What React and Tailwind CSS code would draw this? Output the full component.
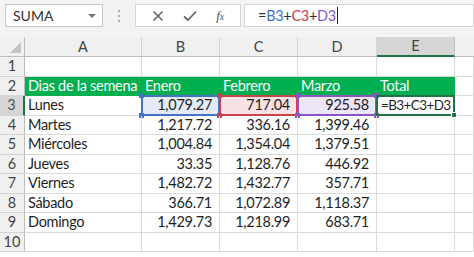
const font = { fontFamily: 'Lato, "Open Sans", sans-serif' };

const COLS = ['A', 'B', 'C', 'D', 'E'];
const DATA = [
  ['Lunes', '1,079.27', '717.04', '925.58'],
  ['Martes', '1,217.72', '336.16', '1,399.46'],
  ['Miércoles', '1,004.84', '1,354.04', '1,379.51'],
  ['Jueves', '33.35', '1,128.76', '446.92'],
  ['Viernes', '1,482.72', '1,432.77', '357.71'],
  ['Sábado', '366.71', '1,072.89', '1,118.37'],
  ['Domingo', '1,429.73', '1,218.99', '683.71'],
];

const RANGE = {
  blue: { border: 'border-[#4472c4]', fill: 'bg-[#e4eaf6]', dot: 'bg-[#4472c4]' },
  red: { border: 'border-[#c8434a]', fill: 'bg-[#f8e2e3]', dot: 'bg-[#c8434a]' },
  purple: { border: 'border-[#8a55c5]', fill: 'bg-[#eee6f7]', dot: 'bg-[#8a55c5]' },
};

function Range({ tone }) {
  const t = RANGE[tone];
  return (
    <div className={`absolute -left-px -top-px -right-px -bottom-px border-2 ${t.border} pointer-events-none`}>
      <span className={`absolute -left-[4px] -top-[4px] w-[5px] h-[5px] ${t.dot}`} />
      <span className={`absolute -right-[4px] -top-[4px] w-[5px] h-[5px] ${t.dot}`} />
      <span className={`absolute -left-[4px] -bottom-[4px] w-[5px] h-[5px] ${t.dot}`} />
      <span className={`absolute -right-[4px] -bottom-[4px] w-[5px] h-[5px] ${t.dot}`} />
    </div>
  );
}

function RowHead({ n, active }) {
  return (
    <div className={`flex items-center justify-center text-[14.5px] border-b border-[#d4d4d4] ${
      active ? 'bg-[#d6d6d6] text-[#555] border-r-2 border-r-[#217346]' : 'bg-[#f0f0f0] text-[#444] border-r border-r-[#bdbdbd]'
    }`}>
      {n}
    </div>
  );
}

function Cell({ children, right, className = '' }) {
  return (
    <div className={`relative flex items-center border-r border-b border-[#dadada] text-[14.5px] tracking-[-0.3px] text-[#1f1f1f] whitespace-nowrap ${
      right ? 'justify-end pr-[7px]' : 'pl-[3px]'
    } ${className}`}>
      {children}
    </div>
  );
}

export default function App() {
  return (
    <div className="w-[474px] h-[257px] overflow-hidden bg-white" style={font}>
      {/* formula bar */}
      <div className="h-[37px] bg-[#f3f3f3] flex items-start pt-[4px]">
        <div className="ml-[5px] w-[98px] h-[23px] bg-white border border-[#c9c9c9] flex items-center justify-between pl-[7px] pr-[6px]">
          <span className="text-[14px] text-[#333]">SUMA</span>
          <span className="w-0 h-0 border-l-[4px] border-r-[4px] border-t-[4px] border-l-transparent border-r-transparent border-t-[#777]" />
        </div>
        <div className="w-[32px] h-[23px] flex flex-col items-center justify-center gap-[3px]">
          <span className="w-[2px] h-[2px] bg-[#aaa]" />
          <span className="w-[2px] h-[2px] bg-[#aaa]" />
          <span className="w-[2px] h-[2px] bg-[#aaa]" />
        </div>
        <div className="w-[106px] h-[23px] bg-white border border-[#d6d6d6] flex items-center justify-around px-[6px]">
          <svg width="12" height="12" viewBox="0 0 12 12"><path d="M1.5 1.5 L10.5 10.5 M10.5 1.5 L1.5 10.5" stroke="#666" strokeWidth="1.6" /></svg>
          <svg width="14" height="12" viewBox="0 0 14 12"><path d="M1 6.5 L5 10 L13 1.5" stroke="#666" strokeWidth="1.8" fill="none" /></svg>
          <span className="text-[13px] italic text-[#555]" style={{ fontFamily: '"Liberation Serif", serif' }}>f<span className="text-[10px]">x</span></span>
        </div>
        <div className="ml-[3px] flex-1 h-[23px] bg-white border border-[#d6d6d6] flex items-center pl-[13px] text-[14.5px] tracking-[-0.3px]">
          <span className="text-[#333]">=</span>
          <span className="text-[#4472c4]">B3</span>
          <span className="text-[#333]">+</span>
          <span className="text-[#c8434a]">C3</span>
          <span className="text-[#333]">+</span>
          <span className="text-[#8a55c5]">D3</span>
          <span className="w-px h-[17px] bg-[#222] ml-px" />
        </div>
      </div>

      {/* sheet */}
      <div className="grid grid-cols-[25px_117px_78px_78px_79px_78px_1fr] grid-rows-[20px_repeat(10,19.5px)]">
        <div className="relative bg-[#f0f0f0] border-r border-b border-[#bdbdbd]">
          <span className="absolute right-[3px] bottom-[3px] w-0 h-0" style={{ borderBottom: '11px solid #c4c4c4', borderLeft: '11px solid transparent' }} />
        </div>
        {COLS.map((c) => (
          <div
            key={c}
            className={`flex items-center justify-center text-[14.5px] border-r ${
              c === 'E'
                ? 'bg-[#d6d6d6] text-[#444] border-b-2 border-b-[#217346] border-r-[#c4c4c4]'
                : 'bg-[#f0f0f0] text-[#444] border-b border-[#bdbdbd] border-r-[#d4d4d4]'
            }`}
          >
            {c}
          </div>
        ))}
        <div className="bg-[#f0f0f0] border-b border-[#bdbdbd]" />

        {/* row 1 */}
        <RowHead n={1} />
        {COLS.map((c) => <Cell key={c} />)}
        <Cell />

        {/* row 2 */}
        <RowHead n={2} />
        {['Dias de la semena', 'Enero', 'Febrero', 'Marzo', 'Total'].map((t) => (
          <div key={t} className="flex items-center pl-[3px] bg-[#00b050] text-white text-[14.5px] tracking-[-0.3px] whitespace-nowrap border-b border-[#00b050]">
            {t}
          </div>
        ))}
        <Cell />

        {/* row 3 */}
        <RowHead n={3} active />
        <Cell>Lunes</Cell>
        <Cell right className={RANGE.blue.fill}>
          1,079.27
          <Range tone="blue" />
        </Cell>
        <Cell right className={RANGE.red.fill}>
          717.04
          <Range tone="red" />
        </Cell>
        <Cell right className={RANGE.purple.fill}>
          925.58
          <Range tone="purple" />
        </Cell>
        <Cell className="z-10">
          <span className="pl-[1px] text-[13.5px] tracking-[-0.6px]">=B3+C3+D3</span>
          <div className="absolute -left-px -top-px -right-px -bottom-px border-2 border-[#217346]">
            <span className="absolute -right-[4px] -bottom-[4px] w-[6px] h-[6px] bg-[#217346] border border-white" />
          </div>
        </Cell>
        <Cell />

        {DATA.slice(1).map((r, i) => (
          <div key={r[0]} className="contents">
            <RowHead n={i + 4} />
            <Cell>{r[0]}</Cell>
            <Cell right>{r[1]}</Cell>
            <Cell right>{r[2]}</Cell>
            <Cell right>{r[3]}</Cell>
            <Cell />
            <Cell />
          </div>
        ))}

        <RowHead n={10} />
        {COLS.map((c) => <Cell key={c} />)}
        <Cell />
      </div>
    </div>
  );
}
